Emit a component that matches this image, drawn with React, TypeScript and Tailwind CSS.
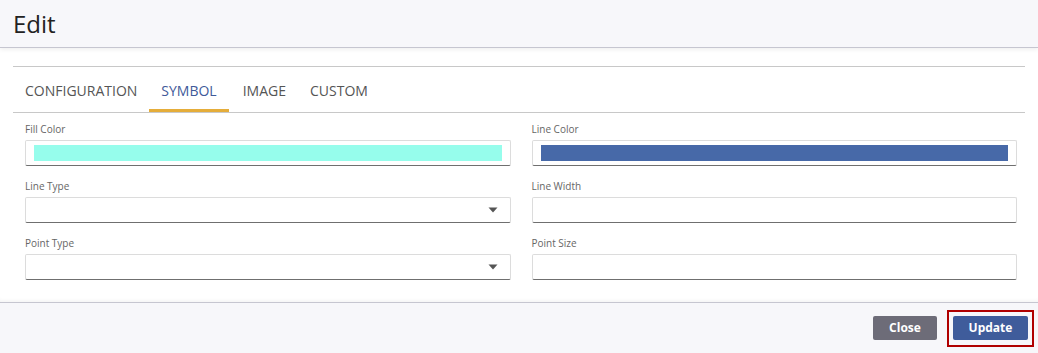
import { useState } from "react";

const tabs = ["CONFIGURATION", "SYMBOL", "IMAGE", "CUSTOM"];

function Field({
  label,
  swatch,
  select,
}: {
  label: string;
  swatch?: string;
  select?: boolean;
}) {
  return (
    <div className="flex flex-col">
      <label className="h-[14px] text-[10px] leading-[14px] text-[#666]">{label}</label>
      <div className="mt-1 flex h-[26px] items-center rounded-[2px] border border-[#dcdcdc] border-b-[#6f6f6f] bg-white pr-2 pl-2">
        {swatch ? (
          <div className="h-4 flex-1" style={{ backgroundColor: swatch }} />
        ) : (
          <div className="flex-1" />
        )}
        {select && (
          <svg width="10" height="6" viewBox="0 0 10 6" className="mr-1">
            <path d="M0.5 0.5h9L5 5.5z" fill="#555" />
          </svg>
        )}
      </div>
    </div>
  );
}

export default function App() {
  const [active, setActive] = useState("SYMBOL");

  return (
    <div className="flex h-[353px] w-[1038px] flex-col bg-white font-['Open_Sans',sans-serif]">
      <header className="relative z-10 flex h-[48px] shrink-0 items-center border-b border-[#c6c6d0] bg-[#f7f7fa] px-[13px] shadow-[0_2px_4px_rgba(0,0,0,0.06)]">
        <h1 className="text-[24px] leading-none text-[#222]">Edit</h1>
      </header>

      <main className="flex-1 px-[13px] pt-[18px] shadow-[inset_0_-4px_4px_-3px_rgba(0,0,0,0.06)]">
        <div className="border-t border-[#c8c8c8]">
          <nav className="flex h-[46px] items-stretch border-b border-[#c8c8c8]">
            {tabs.map((t) => (
              <button
                key={t}
                onClick={() => setActive(t)}
                className={
                  "flex items-center border-b-[3px] px-3 pt-[4px] text-[14px] " +
                  (active === t
                    ? "mr-0.5 border-[#e5ad3a] text-[#3f5a9a]"
                    : "border-transparent text-[#555]")
                }
              >
                {t}
              </button>
            ))}
          </nav>
        </div>

        <div className="grid grid-cols-2 gap-x-[21px] gap-y-[13px] pt-[9px] pr-[8px] pl-[12px]">
          <Field label="Fill Color" swatch="#96fdec" />
          <Field label="Line Color" swatch="#4769a8" />
          <Field label="Line Type" select />
          <Field label="Line Width" />
          <Field label="Point Type" select />
          <Field label="Point Size" />
        </div>
      </main>

      <footer className="flex h-[51px] shrink-0 items-center justify-end gap-2.5 border-t border-[#c6c6d0] bg-[#f7f7fa] pr-[4px]">
        <button className="h-6 w-16 rounded-[2px] bg-[#6d6c78] text-[12px] font-bold text-white">
          Close
        </button>
        <div className="flex h-[37px] w-[87px] items-center justify-center border-2 border-[#b00000]">
          <button className="h-6 w-[75px] rounded-[2px] bg-[#3f5c9b] text-[12px] font-bold text-white">
            Update
          </button>
        </div>
      </footer>
    </div>
  );
}
